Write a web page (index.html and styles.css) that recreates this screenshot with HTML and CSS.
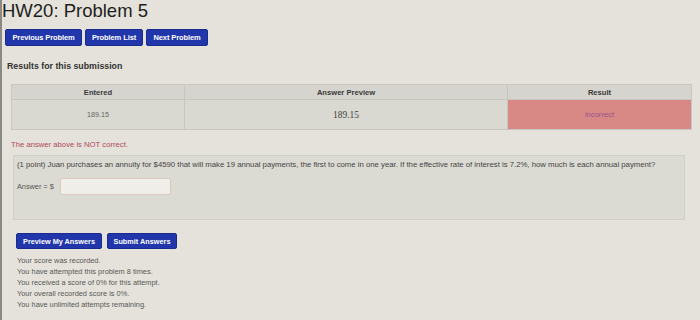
FILE: index.html
```html
<!DOCTYPE html>
<html>
<head>
<meta charset="utf-8">
<link rel="stylesheet" href="styles.css">
</head>
<body>
<div class="page">
  <h1 class="title">HW20: Problem 5</h1>
  <div class="nav">
    <span class="btn nav-btn w-prev">Previous Problem</span>
    <span class="btn nav-btn w-list">Problem List</span>
    <span class="btn nav-btn w-next">Next Problem</span>
  </div>
  <div class="results-heading">Results for this submission</div>
  <table class="results">
    <thead>
      <tr>
        <th class="c1">Entered</th>
        <th class="c2">Answer Preview</th>
        <th class="c3">Result</th>
      </tr>
    </thead>
    <tbody>
      <tr>
        <td class="c1 entered">189.15</td>
        <td class="c2 preview">189.15</td>
        <td class="c3 incorrect">incorrect</td>
      </tr>
    </tbody>
  </table>
  <div class="not-correct">The answer above is NOT correct.</div>
  <div class="problem">
    <div class="problem-text">(1 point) Juan purchases an annuity for $4590 that will make 19 annual payments, the first to come in one year. If the effective rate of interest is 7.2%, how much is each annual payment?</div>
    <div class="answer-row">
      <span class="answer-label">Answer = $</span>
      <span class="answer-input"></span>
    </div>
  </div>
  <div class="actions">
    <span class="btn act-btn w-preview">Preview My Answers</span>
    <span class="btn act-btn w-submit">Submit Answers</span>
  </div>
  <div class="score">
    <div>Your score was recorded.</div>
    <div>You have attempted this problem 8 times.</div>
    <div>You received a score of 0% for this attempt.</div>
    <div>Your overall recorded score is 0%.</div>
    <div>You have unlimited attempts remaining.</div>
  </div>
</div>
</body>
</html>
```
FILE: styles.css
```css
html, body {
  margin: 0;
  padding: 0;
  height: 100%;
}
body {
  background: #e4e2da;
  font-family: "Liberation Sans", Arial, sans-serif;
  color: #333;
  overflow: hidden;
}
.page {
  border-left: 2px solid #8a8985;
  min-height: 320px;
  box-sizing: border-box;
}
.title {
  margin: 0;
  font-size: 18.5px;
  line-height: 21px;
  height: 21px;
  font-weight: normal;
  color: #1e1e1e;
}
.nav {
  display: flex;
  gap: 3px;
  margin-top: 8px;
  padding-left: 3px;
}
.btn {
  display: flex;
  align-items: center;
  justify-content: center;
  background: #2036aa;
  color: #fff;
  font-weight: bold;
  border-radius: 2px;
  box-sizing: border-box;
  white-space: nowrap;
  border: 1px solid #1a2b8e;
}
.nav-btn {
  height: 17px;
  font-size: 7.5px;
  letter-spacing: -0.1px;
}
.w-prev { width: 77px; }
.w-list { width: 58px; }
.w-next { width: 62px; }
.results-heading {
  margin-top: 15px;
  padding-left: 5px;
  font-size: 8.8px;
  line-height: 10px;
  font-weight: bold;
  color: #333;
}
.results {
  margin-top: 13px;
  margin-left: 9px;
  width: 677px;
  border-collapse: collapse;
  table-layout: fixed;
  border: 1px solid #cbcac3;
}
.results th, .results td {
  padding: 0;
  text-align: center;
  border: 1px solid #c7c6bf;
}
.results th {
  height: 14px;
  background: #d5d4ce;
  font-size: 7.6px;
  font-weight: bold;
  color: #3a3a3a;
}
.results td {
  height: 29px;
  background: #d9d8d1;
  font-size: 7.2px;
}
.c1 { width: 172px; }
.c2 { width: 322px; }
.c3 { width: 183px; }
.entered {
  color: #666;
}
.results td.preview {
  font-family: "Liberation Serif", "Times New Roman", serif;
  font-size: 9.5px;
  color: #444;
}
.results td.incorrect {
  background: #d88985;
  color: #9b4f8e;
  font-size: 7.6px;
}
.not-correct {
  margin-top: 10px;
  padding-left: 9px;
  font-size: 7.7px;
  line-height: 10px;
  color: #b2495a;
}
.problem {
  margin-top: 5px;
  margin-left: 11px;
  width: 672px;
  height: 65px;
  box-sizing: border-box;
  background: #dcdbd3;
  border: 1px solid #d0cfc7;
  padding: 4px 0 0 3px;
}
.problem-text {
  font-size: 7.75px;
  line-height: 10px;
  color: #444;
  white-space: nowrap;
}
.answer-row {
  display: flex;
  align-items: center;
  margin-top: 8px;
}
.answer-label {
  font-size: 7.3px;
  color: #555;
  width: 43px;
}
.answer-input {
  display: block;
  width: 111px;
  height: 17px;
  box-sizing: border-box;
  background: #efeee9;
  border: 1px solid #dcc8bd;
  border-radius: 2px;
}
.actions {
  display: flex;
  gap: 5px;
  margin-top: 13px;
  padding-left: 14px;
}
.act-btn {
  height: 16px;
  font-size: 7.3px;
}
.w-preview { width: 86px; }
.w-submit { width: 70px; }
.score {
  margin-top: 6px;
  padding-left: 15px;
  font-size: 7.4px;
  line-height: 11px;
  color: #585858;
}
```
